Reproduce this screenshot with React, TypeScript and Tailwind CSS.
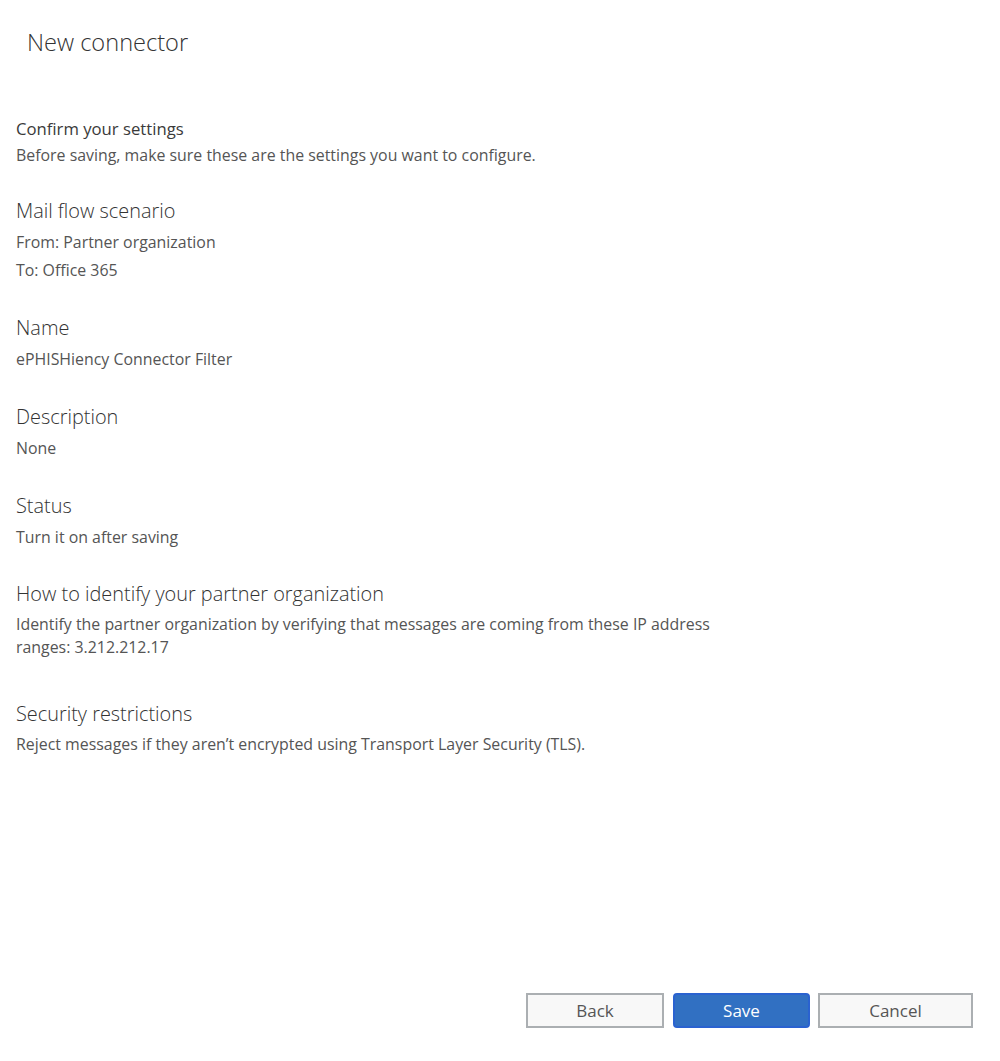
import React from "react";

const sections = [
  { title: "Mail flow scenario", lines: ["From: Partner organization", "To: Office 365"] },
  { title: "Name", lines: ["ePHISHiency Connector Filter"] },
  { title: "Description", lines: ["None"] },
  { title: "Status", lines: ["Turn it on after saving"] },
];

export default function App() {
  return (
    <div
      className="h-[1061px] bg-white flex flex-col"
      style={{ fontFamily: '"Open Sans", "Noto Sans", sans-serif' }}
    >
      <h1 className="mt-[26px] pl-[27px] text-[23.6px] leading-[32px] font-light text-[#333333]">
        New connector
      </h1>

      <div className="pl-4 pr-4">
        {/* Intro */}
        <div className="mt-[59px]">
          <h2 className="text-[16.7px] leading-[24px] text-[#3a3a3a]">Confirm your settings</h2>
          <p className="mt-[2px] text-[15.9px] leading-[24px] text-[#555555]">
            Before saving, make sure these are the settings you want to configure.
          </p>
        </div>

        {sections.map((s) => (
          <div key={s.title} className="mt-[30px] first:mt-[29px]">
            <h3 className="text-[19.9px] leading-[28px] font-light text-[#333333]">{s.title}</h3>
            <div className="mt-[3px]">
              {s.lines.map((l) => (
                <p key={l} className="text-[15.9px] leading-[28px] text-[#555555]">
                  {l}
                </p>
              ))}
            </div>
          </div>
        ))}

        <div className="mt-[29px]">
          <h3 className="text-[19.9px] leading-[28px] font-light text-[#333333]">
            How to identify your partner organization
          </h3>
          <p className="mt-[5px] w-[720px] text-[15.9px] leading-[23px] text-[#555555]">
            Identify the partner organization by verifying that messages are coming from these IP address ranges: 3.212.212.17
          </p>
        </div>

        <div className="mt-[41px]">
          <h3 className="text-[19.9px] leading-[28px] font-light text-[#333333]">Security restrictions</h3>
          <p className="mt-[2px] text-[15.9px] leading-[28px] text-[#555555]">
            Reject messages if they aren’t encrypted using Transport Layer Security (TLS).
          </p>
        </div>
      </div>

      {/* Footer buttons */}
      <div className="mt-auto mb-[33px] pr-[27px] flex justify-end">
        <button className="w-[138px] h-[35px] border-2 border-[#abafb2] bg-[#f8f8f8] text-[17px] text-[#555555]">
          Back
        </button>
        <button className="ml-[9px] w-[137px] h-[35px] border-2 border-[#2a62d0] rounded-[4px] bg-[#3170c2] text-[17px] text-white">
          Save
        </button>
        <button className="ml-2 w-[155px] h-[35px] border-2 border-[#abafb2] bg-[#f8f8f8] text-[17px] text-[#555555]">
          Cancel
        </button>
      </div>
    </div>
  );
}
